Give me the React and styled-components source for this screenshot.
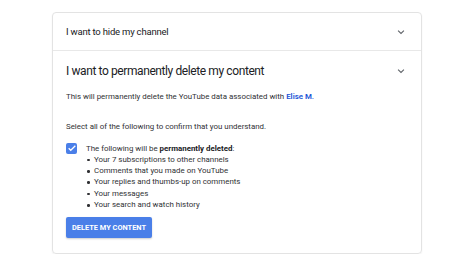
import React, { useState } from 'react';
import styled, { createGlobalStyle } from 'styled-components';

const GlobalStyle = createGlobalStyle`
  html, body {
    margin: 0;
    padding: 0;
    background: #ffffff;
    font-family: Roboto, 'Liberation Sans', sans-serif;
    color: #202124;
  }
`;

const items = [
  'Your 7 subscriptions to other channels',
  'Comments that you made on YouTube',
  'Your replies and thumbs-up on comments',
  'Your messages',
  'Your search and watch history',
];

function Chevron() {
  return (
    <svg width="10" height="10" viewBox="0 0 24 24">
      <path d="M5 8.5l7 7 7-7" fill="none" stroke="#5f6368" strokeWidth="2.6" />
    </svg>
  );
}

export default function App() {
  const [checked, setChecked] = useState(true);

  return (
    <Page>
      <GlobalStyle />
      <Card>
        <Header>
          <HeaderTitle>I want to hide my channel</HeaderTitle>
          <Chevron />
        </Header>
        <Section>
          <Header $big>
            <HeaderTitle $big>I want to permanently delete my content</HeaderTitle>
            <Chevron />
          </Header>
          <Body>
            <Text>
              This will permanently delete the YouTube data associated with{' '}
              <Link>Elise M.</Link>
            </Text>
            <Text $top={19}>Select all of the following to confirm that you understand.</Text>
            <CheckRow>
              <Box $on={checked} onClick={() => setChecked(!checked)}>
                {checked && (
                  <svg width="10" height="10" viewBox="0 0 24 24">
                    <path d="M4 12.5l5 5L20 6.5" fill="none" stroke="#fff" strokeWidth="3" />
                  </svg>
                )}
              </Box>
              <div>
                <Text>
                  The following will be <b>permanently deleted</b>:
                </Text>
                <List>
                  {items.map((item) => (
                    <li key={item}>{item}</li>
                  ))}
                </List>
              </div>
            </CheckRow>
            <Button $on={checked}>DELETE MY CONTENT</Button>
          </Body>
        </Section>
      </Card>
    </Page>
  );
}

const Page = styled.div`
  padding: 12px 52px 0 52px;
  width: 474px;
  box-sizing: border-box;
`;

const Card = styled.div`
  width: 370px;
  height: 242px;
  box-sizing: border-box;
  border: 1px solid #e3e3e3;
  border-radius: 4px;
  box-shadow: 0 1px 2px rgba(0, 0, 0, 0.06);
`;

const Header = styled.div`
  display: flex;
  align-items: center;
  justify-content: space-between;
  padding: 0 15px 0 13px;
  height: ${(p) => (p.$big ? '40px' : '37px')};
  border-bottom: ${(p) => (p.$big ? 'none' : '1px solid #e8e8e8')};
`;

const HeaderTitle = styled.div`
  font-size: ${(p) => (p.$big ? '12px' : '9.5px')};
  letter-spacing: ${(p) => (p.$big ? '-0.4px' : '-0.2px')};
  color: #202124;
`;

const Section = styled.div`
  display: flex;
  flex-direction: column;
`;

const Body = styled.div`
  padding: 0 13px;
`;

const Text = styled.div`
  font-size: 7.9px;
  line-height: 11.3px;
  color: #303134;
  margin-top: ${(p) => (p.$top ? `${p.$top}px` : '0')};
  b {
    color: #202124;
    font-weight: 700;
  }
`;

const Link = styled.span`
  color: #1a55d6;
  font-weight: 600;
`;

const CheckRow = styled.div`
  display: flex;
  gap: 9px;
  margin-top: 10px;
`;

const Box = styled.div`
  width: 11px;
  height: 11px;
  border-radius: 2px;
  background: ${(p) => (p.$on ? '#4a7fe8' : '#fff')};
  border: ${(p) => (p.$on ? 'none' : '1px solid #5f6368')};
  display: flex;
  align-items: center;
  justify-content: center;
  cursor: pointer;
`;

const List = styled.ul`
  margin: 0;
  padding-left: 1px;
  list-style: none;
  li {
    font-size: 7.9px;
    line-height: 11.3px;
    color: #303134;
    position: relative;
    padding-left: 7px;
  }
  li::before {
    content: '';
    position: absolute;
    left: 0;
    top: 5px;
    width: 2.5px;
    height: 2.5px;
    border-radius: 50%;
    background: #303134;
  }
`;

const Button = styled.button`
  display: block;
  margin-top: 7px;
  height: 21px;
  padding: 0 6px;
  border: none;
  border-radius: 2px;
  background: ${(p) => (p.$on ? '#4a7fe8' : '#c4c4c4')};
  color: #fff;
  font-family: Roboto, 'Liberation Sans', sans-serif;
  font-size: 7.4px;
  font-weight: 700;
  box-shadow: 0 1px 2px rgba(0, 0, 0, 0.2);
  cursor: pointer;
`;
